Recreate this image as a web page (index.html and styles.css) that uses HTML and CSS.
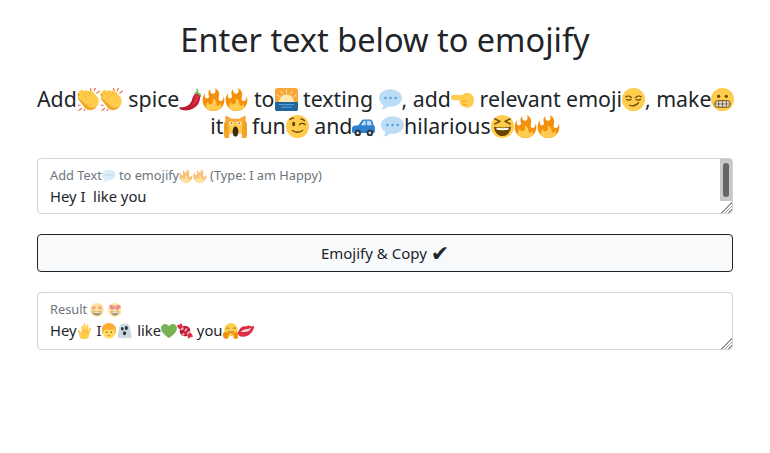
FILE: index.html
```html
<!DOCTYPE html>
<html lang="en">
<head>
<meta charset="utf-8">
<title>Emojify</title>
<link rel="stylesheet" href="styles.css">
</head>
<body>
<svg class="defs" aria-hidden="true">
  <symbol id="clap" viewBox="0 0 36 36">
    <g stroke="#E8674A" stroke-width="1.8" stroke-linecap="round" fill="none"><path d="M21 1l1 3M29 0l-2 4M35 5l-4 3M2 27l3 0M3 35l4-3M11 36l1-2"/></g>
    <path fill="#F4A62A" d="M1 9c1-2 4-2 6 0l2 1c1-2 4-2 6 0l3 1 3-1 9 8c3 5 2 11-2 14-5 4-11 3-15 0L3 19c-2-2-2-4 0-5L1 12z"/>
    <path fill="#FFCC4D" d="M5 4c2-2 4-1 6 1l2-1c2-1 4 0 5 1l2-1c3 0 4 1 5 2l7 8c3 5 3 11-1 14-4 4-10 3-14 0L4 17c-2-2-1-4 1-5L3 9c-1-2 0-4 2-5z"/>
    <path fill="none" stroke="#E8A020" stroke-width="1" d="M7 7l8 8M12 6l7 7M18 6l5 6"/>
  </symbol>
  <symbol id="chili" viewBox="0 0 36 36">
    <path fill="#77B255" d="M28 1c2 0 2 1 2 3l0 3c3 1 5 3 5 6l-3 3-8-5c0-3 2-5 4-6l-1-3z"/>
    <path fill="#BE1931" d="M24 10c4-2 9 1 9 5 0 3-1 6-2 8-4 8-14 13-24 12-4-1-7-2-7-4 1-1 3-1 5-1 6 0 11-3 14-8 2-4 2-9 5-12z"/>
    <path fill="#DD2E44" d="M25 11c3-1 6 1 6 4 0 6-8 13-15 15 5-4 9-8 9-19z"/>
  </symbol>
  <symbol id="fire" viewBox="0 0 36 36">
    <path fill="#F4900C" d="M35 19c0-2.062-.367-4.039-1.04-5.868-.46 5.389-3.333 8.157-6.335 6.868-2.812-1.208-.917-5.917-.777-8.164.236-3.809-.012-8.169-6.931-11.794 2.875 5.5.333 8.917-2.333 9.125-2.958.231-5.667-2.542-4.667-7.042-3.238 2.386-3.332 6.402-2.333 9 1.042 2.708-.042 4.958-2.583 5.208-2.84.28-4.418-3.041-2.963-8.333C2.52 10.965 1 14.805 1 19c0 9.389 7.611 17 17 17s17-7.611 17-17z"/>
    <path fill="#FFCC4D" d="M28.394 23.999c.148 3.084-2.561 4.293-4.019 3.709-2.106-.843-1.541-2.291-2.083-5.291s-2.625-5.083-5.708-6c2.25 6.333-1.247 8.667-3.08 9.084-1.872.426-3.753-.001-3.968-4.007C7.352 23.668 6 26.676 6 30c0 .368.023.73.055 1.09C9.125 34.124 13.342 36 18 36s8.875-1.876 11.945-4.91c.032-.36.055-.722.055-1.09 0-2.187-.584-4.236-1.606-6.001z"/>
  </symbol>
  <symbol id="sunrise" viewBox="0 0 36 36">
    <rect width="36" height="36" rx="4" fill="#F9A63A"/>
    <g stroke="#FFE8A8" stroke-width="1.5" stroke-linecap="round"><path d="M18 3v4M9 5l2.500 4M27 5l-2.500 4M3 11l4 3M33 11l-4 3"/></g>
    <path fill="#FFE8B6" d="M6 22a12 12 0 0 1 24 0z"/>
    <path fill="#226699" d="M0 22h36v10a4 4 0 0 1-4 4H4a4 4 0 0 1-4-4z"/>
    <path stroke="#55ACEE" stroke-width="1.500" d="M6 26h24M10 30h16"/>
  </symbol>
  <symbol id="speech" viewBox="0 0 36 36">
    <path fill="#BBDDF5" d="M18 2C8 2 0 8 0 15.500c0 4.500 3 8.500 7 11-.300 2.500-1.500 5.500-3.500 7.500 4-.3 8-2.200 11-5 1.100.2 2.300.3 3.500.3 10 0 18-6.300 18-13.800S28 2 18 2z"/>
    <circle cx="10" cy="15.500" r="2" fill="#5D9DD5"/><circle cx="18" cy="15.500" r="2" fill="#5D9DD5"/><circle cx="26" cy="15.500" r="2" fill="#5D9DD5"/>
  </symbol>
  <symbol id="point" viewBox="0 0 36 36">
    <path fill="#FFCC4D" d="M0 14c0-2 1.500-3 3-3h15c3-3 6-4 9-3 6 1 9 6 9 11 0 7-5 12-11 12-4 0-8-2-10-5-2-3-2-5-1-7H3c-1.500 0-3-2-3-5z"/>
    <path fill="#F4A62A" d="M16 20h8c1 0 1 2 0 2h-7zM18 25h6c1 0 1 2 0 2h-4z"/>
  </symbol>
  <symbol id="smirk" viewBox="0 0 36 36">
    <circle cx="18" cy="18" r="18" fill="#FFCC4D"/>
    <g fill="none" stroke="#664500" stroke-width="2" stroke-linecap="round"><path d="M6 14c2-2 6-2 9 1M21 15c3-3 7-3 9-1M7 18c2 1 5 1 7 0M22 18c2 1 5 1 7 0M12 27c5 2 10 1 14-4"/></g>
  </symbol>
  <symbol id="grimace" viewBox="0 0 36 36">
    <circle cx="18" cy="18" r="18" fill="#FFCC4D"/>
    <circle cx="12" cy="13" r="2.500" fill="#664500"/><circle cx="24" cy="13" r="2.500" fill="#664500"/>
    <rect x="6" y="20" width="24" height="10" rx="4" fill="#E1E8ED" stroke="#664500" stroke-width="1.500"/>
    <path stroke="#664500" stroke-width="1.200" d="M6 25h24M12 20v10M18 20v10M24 20v10"/>
  </symbol>
  <symbol id="scream" viewBox="0 0 36 36">
    <path fill="#F9A63A" d="M4 1l8 5h12l8-5c2 0 2 2 2 4v24H2V5c0-2 0-4 2-4z"/>
    <path fill="#FFCC4D" d="M8 10h20c2 3 2 10 0 18H8c-2-8-2-15 0-18z"/>
    <circle cx="12" cy="13" r="2.500" fill="#fff"/><circle cx="24" cy="13" r="2.500" fill="#fff"/>
    <circle cx="12" cy="13" r="1.200" fill="#664500"/><circle cx="24" cy="13" r="1.200" fill="#664500"/>
    <ellipse cx="18" cy="26" rx="4.500" ry="8" fill="#3D2A12"/>
    <path fill="#F4A62A" d="M0 14c0-2 1-4 3-4h3l2 10v16H3c-2 0-3-2-3-4zM36 14c0-2-1-4-3-4h-3l-2 10v16h5c2 0 3-2 3-4z"/>
    <path stroke="#D88A1A" stroke-width="1" d="M3 12v12M33 12v12"/>
  </symbol>
  <symbol id="wink" viewBox="0 0 36 36">
    <circle cx="18" cy="18" r="18" fill="#FFCC4D"/>
    <ellipse cx="12" cy="14" rx="2.500" ry="3.500" fill="#664500"/>
    <g fill="none" stroke="#664500" stroke-width="2" stroke-linecap="round"><path d="M21 15c2-2.500 6-2.500 9 0M6 7c2-1.500 4-2 6-2M23 6c2 0 4 1 6 3M10 24c4 4 12 4 16 0"/></g>
  </symbol>
  <symbol id="car" viewBox="0 0 36 36">
    <path fill="#2F80CE" d="M0 21c0-2 1-3 3-4l7-1 5-7c1-1 2-2 4-2h9c2 0 3 1 4 3l2 6c1 1 2 2 2 4v6c0 1-1 2-2 2H2c-1 0-2-1-2-2z"/>
    <path fill="#BBDDF5" d="M14 16l3.500-6c.5-.7 1-1 2-1h2v7zM23.500 9h4c1 0 1.500.5 2 1.500l1.500 5.500h-7.500z"/>
    <circle cx="9" cy="28" r="5" fill="#292F33"/><circle cx="28" cy="28" r="5" fill="#292F33"/>
    <circle cx="9" cy="28" r="2.200" fill="#CCD6DD"/><circle cx="28" cy="28" r="2.200" fill="#CCD6DD"/>
  </symbol>
  <symbol id="laugh" viewBox="0 0 36 36">
    <circle cx="18" cy="18" r="18" fill="#FFCC4D"/>
    <path fill="#664500" d="M5 18c6 2 20 2 26 0 0 9-6 15-13 15S5 27 5 18z"/>
    <path fill="#fff" d="M8 20c6 1 14 1 20 0l-1 3c-5 1-13 1-18 0z"/>
    <g fill="none" stroke="#664500" stroke-width="2.200" stroke-linecap="round" stroke-linejoin="round"><path d="M6 6l8 4-8 4M30 6l-8 4 8 4"/></g>
  </symbol>
  <symbol id="star" viewBox="0 0 36 36">
    <circle cx="18" cy="18" r="18" fill="#FFCC4D"/>
    <path fill="#664500" d="M6 21c6 2 18 2 24 0 0 8-5 12-12 12S6 29 6 21z"/>
    <path fill="#fff" d="M9 22.500c5 1 13 1 18 0v2c-5 1-13 1-18 0z"/>
    <path fill="#E95F28" d="M10 5l2 5 5 .5-4 3.500 1 5-4-3-5 3 1.500-5L3 10.500l5-.5zM26 5l2 5 5 .5-4 3.500 1.500 5-4.500-3-4 3 1-5-4-3.500 5-.5z"/>
  </symbol>
  <symbol id="hearteyes" viewBox="0 0 36 36">
    <circle cx="18" cy="18" r="18" fill="#FFCC4D"/>
    <path fill="#664500" d="M7 21c6 2 16 2 22 0 0 7-5 12-11 12S7 28 7 21z"/>
    <path fill="#fff" d="M9 22.500c5 1 13 1 18 0v2c-5 1-13 1-18 0z"/>
    <path fill="#DD2E44" d="M10 5c2 0 3 1 4 2.500 2-1 6 0 5 4-1 3-5 6-9 7-2-3-6-5-7-9 0-3 3-5 7-4.500zM26 5c-2 0-3 1-4 2.500-2-1-6 0-5 4 1 3 5 6 9 7 2-3 6-5 7-9 0-3-3-5-7-4.500z"/>
  </symbol>
  <symbol id="hand" viewBox="0 0 36 36">
    <path fill="#FFCC4D" d="M2 17c1-2 4-1 5 1l3 5V8c0-3 4-3 4 0l1 7 0-12c0-3 4-3 4 0l1 12 2-10c1-3 5-2 4 1l-1 11 3-5c1-3 5-2 4 1l-4 11c-1 7-2 11-9 13-6 1-11-1-13-6z"/>
    <path fill="none" stroke="#E8A020" stroke-width="1" d="M14 15v8M19 15v8M24 16l-1 7"/>
  </symbol>
  <symbol id="person" viewBox="0 0 36 36">
    <circle cx="18" cy="20" r="15" fill="#FFDC5D"/>
    <path fill="#FFAC33" d="M18 0C8 0 2 7 2 15c0 4 1 7 2 9 1-4 3-8 7-10 7 2 15 2 19-1 1 3 1 7 2 11 2-2 2-6 2-9C34 7 28 0 18 0z"/>
    <circle cx="13" cy="21" r="1.600" fill="#664500"/><circle cx="23" cy="21" r="1.600" fill="#664500"/>
    <path fill="none" stroke="#C1694F" stroke-width="1.500" stroke-linecap="round" d="M15 28c2 1 4 1 6 0"/>
  </symbol>
  <symbol id="ghost" viewBox="0 0 36 36">
    <path fill="#CCD6DD" d="M18 1C8 1 4 8 4 15c0 5-2 9-2 14 0 6 4 6 7 4 2-1 4 2 7 2 3 1 6-2 8-1 3 2 9 1 9-4 0-5-3-9-3-15C30 8 28 1 18 1z"/>
    <ellipse cx="21" cy="11" rx="3.500" ry="4.500" fill="#292F33"/><ellipse cx="12" cy="13" rx="3" ry="4" fill="#292F33"/>
    <ellipse cx="17" cy="23" rx="3.500" ry="4.500" fill="#292F33"/>
  </symbol>
  <symbol id="greenheart" viewBox="0 0 36 36">
    <path fill="#77B255" d="M36 11.500C36 6 31.500 2 26.500 2 22.800 2 19.600 4.200 18 7.300 16.400 4.200 13.200 2 9.500 2 4.500 2 0 6 0 11.500 0 24 18 34 18 34s18-10 18-22.500z"/>
  </symbol>
  <symbol id="candy" viewBox="0 0 36 36">
    <path fill="#DD2E44" d="M9 0c-1 3-3 5-9 5 1 4 3 8 7 9l6-4c-1-3-1-8-4-10zM27 36c1-3 3-5 9-5-1-4-3-8-7-9l-6 4c1 3 1 8 4 10z"/>
    <circle cx="18" cy="18" r="12" fill="#BE1931"/>
    <path fill="#F4ABBA" d="M12 9l4 2-4 6-5-2zM20 11l4 2-4 7-4-2zM27 17l3 4-6 6-3-2zM14 22l4 2-3 5-5-2z"/>
  </symbol>
  <symbol id="hug" viewBox="0 0 36 36">
    <circle cx="18" cy="15" r="15" fill="#FFCC4D"/>
    <path fill="none" stroke="#664500" stroke-width="1.600" stroke-linecap="round" d="M8 12c1-2 4-2 5 0M23 12c1-2 4-2 5 0M12 19c3 3 9 3 12 0"/>
    <path fill="#F4900C" d="M0 29c-1-5 2-9 5-9l6 2c2 0 3-1 4 1 1 3-2 4-4 5l2 3c0 3-3 5-6 5-3 0-7-3-7-7zM36 29c1-5-2-9-5-9l-6 2c-2 0-3-1-4 1-1 3 2 4 4 5l-2 3c0 3 3 5 6 5 3 0 7-3 7-7z"/>
  </symbol>
  <symbol id="lips" viewBox="0 0 36 36">
    <path fill="#DD2E44" d="M36 6c-2 2-5 2-8 1-4-2-7-2-10 1-6-2-12 2-15 7-2 3-3 5-3 7 0 6 4 9 11 9 8 0 14-3 19-9 4-5 7-11 6-16z"/>
    <path fill="#F7DEE3" d="M6 20c4-3 8-6 12-6 4 0 9-2 12-4-2 6-7 10-12 10-4 1-8 1-12 0z"/>
    <path fill="#BE1931" d="M7 21c6 0 12 0 16-3-4 4-10 5-16 3z"/>
  </symbol>
</svg>

<main class="page">
  <h1 class="title">Enter text below to emojify</h1>
  <h2 class="lead">Add<svg class="e"><use href="#clap"/></svg><svg class="e"><use href="#clap"/></svg> spice<svg class="e"><use href="#chili"/></svg><svg class="e"><use href="#fire"/></svg><svg class="e"><use href="#fire"/></svg> to<svg class="e"><use href="#sunrise"/></svg> texting <svg class="e"><use href="#speech"/></svg>, add<svg class="e"><use href="#point"/></svg> relevant emoji<svg class="e"><use href="#smirk"/></svg>, make<svg class="e"><use href="#grimace"/></svg><br>it<svg class="e"><use href="#scream"/></svg> fun<svg class="e"><use href="#wink"/></svg> and<svg class="e"><use href="#car"/></svg> <svg class="e"><use href="#speech"/></svg>hilarious<svg class="e"><use href="#laugh"/></svg><svg class="e"><use href="#fire"/></svg><svg class="e"><use href="#fire"/></svg></h2>

  <div class="box">
    <div class="hint">Add Text<svg class="e faded"><use href="#speech"/></svg> to emojify<svg class="e faded"><use href="#fire"/></svg><svg class="e faded"><use href="#fire"/></svg> (Type: I am Happy)</div>
    <div class="value">Hey I &nbsp;like you</div>
    <div class="scrollbar"><div class="thumb"></div></div>
    <div class="grip"></div>
  </div>

  <button class="action" type="button">Emojify &amp; Copy <span class="tick">✔</span></button>

  <div class="box box-result">
    <div class="hint">Result <svg class="e faded"><use href="#star"/></svg> <svg class="e faded"><use href="#hearteyes"/></svg></div>
    <div class="value">Hey<svg class="e"><use href="#hand"/></svg> I<svg class="e"><use href="#person"/></svg><svg class="e"><use href="#ghost"/></svg> like<svg class="e"><use href="#greenheart"/></svg><svg class="e"><use href="#candy"/></svg> you<svg class="e"><use href="#hug"/></svg><svg class="e"><use href="#lips"/></svg></div>
    <div class="grip"></div>
  </div>
</main>
</body>
</html>
```

FILE: styles.css
```css
* { box-sizing: border-box; }
html, body { margin: 0; padding: 0; background: #fff; }
body {
  font-family: "Noto Sans", "Open Sans", sans-serif;
  color: #212529;
}
.defs { position: absolute; width: 0; height: 0; overflow: hidden; }
.page { padding: 17px 37px 0; display: flex; flex-direction: column; }
.title {
  margin: 0;
  font-size: 32.5px;
  font-weight: 400;
  line-height: 46px;
  text-align: center;
  white-space: nowrap;
}
.lead {
  margin: 22px 0 0;
  font-size: 21.3px;
  font-weight: 400;
  line-height: 27px;
  text-align: center;
  white-space: nowrap;
}
.e {
  width: 1.08em;
  height: 1.08em;
  vertical-align: -0.2em;
}
.faded { opacity: 0.55; }
.box {
  position: relative;
  margin-top: 19px;
  height: 56px;
  padding: 6px 12px;
  border: 1px solid #ced4da;
  border-radius: 4px;
  background: #fff;
}
.box-result { margin-top: 20px; height: 58px; padding-top: 6px; }
.hint { font-size: 12.8px; line-height: 21px; color: #6c757d; white-space: nowrap; }
.value { font-size: 14.8px; line-height: 21px; color: #212529; white-space: nowrap; }
.scrollbar {
  position: absolute;
  top: 0;
  right: 0;
  width: 12px;
  height: 42px;
  padding: 4px 3px;
  background: #c8c8c8;
}
.thumb { height: 34px; border-radius: 3px; background: #666; }
.grip {
  position: absolute;
  right: 0;
  bottom: 0;
  width: 12px;
  height: 12px;
  background: repeating-linear-gradient(135deg, transparent 0 1.500px, #999 1.500px 2.500px);
  clip-path: polygon(100% 0, 100% 100%, 0 100%);
}
.action {
  margin-top: 20px;
  height: 38px;
  width: 100%;
  padding: 0;
  border: 1px solid #212529;
  border-radius: 4px;
  background: #f8f9fa;
  color: #212529;
  font-family: inherit;
  font-size: 15px;
  line-height: 22px;
}
.tick { font-family: "DejaVu Sans", sans-serif; font-size: 22px; line-height: 22px; vertical-align: -2px; }
```
